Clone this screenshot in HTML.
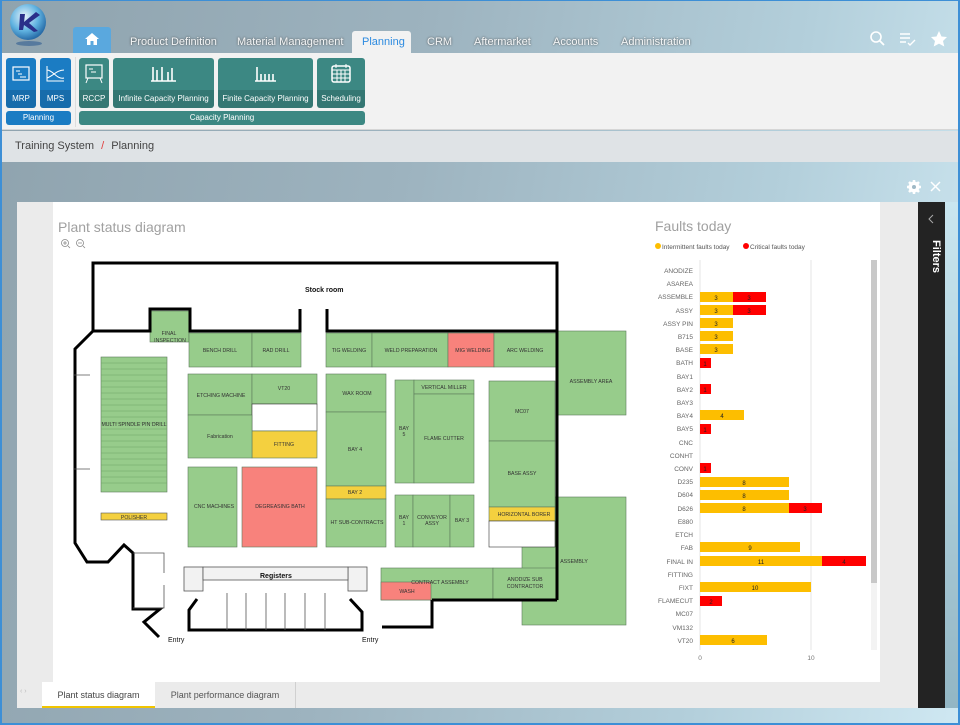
<!DOCTYPE html>
<html><head><meta charset="utf-8"><style>
*{margin:0;padding:0;box-sizing:border-box}
body{width:960px;height:725px;overflow:hidden;font-family:"Liberation Sans",sans-serif;position:relative;
background:linear-gradient(100deg,#8fa3ae 0%,#9db3bf 40%,#b3cfdb 75%,#cfe8f2 100%);}
.a{position:absolute}
.tab{position:absolute;top:36px;font-size:11px;color:#f4f6f7;text-shadow:0 0 2px #444}
.btn{position:absolute;top:58px;height:50px;border-radius:3px;color:#fff;font-size:8px;text-align:center}
.btn .l{position:absolute;left:0;right:0;bottom:0;height:18px;line-height:18px;background:rgba(0,0,0,.12);border-radius:0 0 3px 3px}
.blue{background:#1b7cc3}.teal{background:#3c8883}
.grp{position:absolute;top:111px;height:14px;line-height:14px;font-size:8px;color:#fff;text-align:center;border-radius:3px}
</style></head><body>
<div class="a" style="left:0;top:0;width:960px;height:725px;border:2px solid #3d8fd6;border-top-width:1px"></div>
<!-- logo -->
<div class="a" style="left:10px;top:4px;width:36px;height:36px;border-radius:50%;background:radial-gradient(circle at 40% 35%,#e8f4fb,#5fb2e0 45%,#1c5d9c 80%,#0e3d70)"></div>
<svg class="a" style="left:10px;top:4px" width="36" height="36"><path d="M10 10 L15 10 L14 18 L26 8 L30 11 L19 19 L28 27 L24 28 L14 21 L13 26 L9 26 Z" fill="#2a2f8a"/></svg>
<div class="a" style="left:16px;top:41px;width:26px;height:5px;border-radius:50%;background:rgba(30,80,140,.5)"></div>
<div class="a" style="left:73px;top:27px;width:38px;height:26px;background:#5aa8de;border-radius:3px 3px 0 0"></div>
<svg class="a" style="left:84px;top:32px" width="16" height="14"><path d="M8 1 L15 7 L13 7 L13 13 L9.5 13 L9.5 9 L6.5 9 L6.5 13 L3 13 L3 7 L1 7 Z" fill="#fff"/></svg>
<div class="tab" style="left:130px">Product Definition</div>
<div class="tab" style="left:237px">Material Management</div>
<div class="a" style="left:352px;top:31px;width:59px;height:22px;background:#f2f2f2;border-radius:3px 3px 0 0"></div>
<div class="tab" style="left:362px;color:#2d8be0;text-shadow:none">Planning</div>
<div class="tab" style="left:427px">CRM</div>
<div class="tab" style="left:474px">Aftermarket</div>
<div class="tab" style="left:553px">Accounts</div>
<div class="tab" style="left:621px">Administration</div>
<svg class="a" style="left:868px;top:29px" width="82" height="20">
<circle cx="8" cy="8" r="5" fill="none" stroke="#fff" stroke-width="1.6"/><path d="M12 12 L16 16" stroke="#fff" stroke-width="1.8"/>
<path d="M32 5h10M32 9h10M32 13h6" stroke="#fff" stroke-width="1.4"/><path d="M40 14l2 2 5-5" stroke="#fff" stroke-width="1.4" fill="none"/>
<path d="M71 2 L73.5 7.5 L79 8 L75 12 L76.3 17.5 L71 14.6 L65.7 17.5 L67 12 L63 8 L68.5 7.5 Z" fill="#fff"/>
</svg>
<!-- ribbon -->
<div class="a" style="left:2px;top:53px;width:956px;height:77px;background:#f2f2f2;border-bottom:1px solid #d6d6d6"></div>
<div class="a" style="left:75px;top:57px;width:1px;height:70px;background:#ddd"></div>
<div class="btn blue" style="left:6px;width:30px"><svg width="30" height="32"><rect x="7" y="9" width="16" height="13" fill="none" stroke="#fff" stroke-width="1.2"/><path d="M10 13h4M12 16h4M14 19h6" stroke="#fff"/></svg><div class="l">MRP</div></div>
<div class="btn blue" style="left:40px;width:31px"><svg width="31" height="32"><path d="M7 8v15h17M7 12c6 0 10 10 17 8M7 20c6-2 10-8 17-8" stroke="#fff" fill="none"/></svg><div class="l">MPS</div></div>
<div class="grp blue" style="left:6px;width:65px">Planning</div>
<div class="btn teal" style="left:79px;width:30px"><svg width="30" height="32"><rect x="7" y="7" width="16" height="13" fill="none" stroke="#fff" stroke-width="1.2"/><path d="M10 11h4M12 14h5M9 20l-2 5M21 20l2 5" stroke="#fff"/></svg><div class="l">RCCP</div></div>
<div class="btn teal" style="left:113px;width:101px"><svg width="101" height="32"><path d="M40 9v14M44 12v11M49 9v14M55 14v9M59 10v13M38 23h25" stroke="#fff" stroke-width="1.6"/></svg><div class="l">Infinite Capacity Planning</div></div>
<div class="btn teal" style="left:218px;width:95px"><svg width="95" height="32"><path d="M39 9v14M43 16v7M47 16v7M51 16v7M55 16v7M37 23h21" stroke="#fff" stroke-width="1.6"/></svg><div class="l">Finite Capacity Planning</div></div>
<div class="btn teal" style="left:317px;width:48px"><svg width="48" height="32"><rect x="15" y="8" width="18" height="16" rx="2" fill="none" stroke="#fff" stroke-width="1.5"/><path d="M15 12h18M19 6v4M29 6v4M15 16h18M15 20h18M20 12v12M24 12v12M28 12v12" stroke="#fff"/></svg><div class="l">Scheduling</div></div>
<div class="grp teal" style="left:79px;width:286px">Capacity Planning</div>
<!-- breadcrumb -->
<div class="a" style="left:2px;top:131px;width:956px;height:31px;background:#dfe3e6"></div>
<div class="a" style="left:15px;top:140px;font-size:11px;color:#444">Training System <span style="color:#e03c3c;margin:0 4px">/</span> Planning</div>
<svg class="a" style="left:904px;top:179px" width="40" height="16"><circle cx="10" cy="8" r="5.5" fill="#fff"/><circle cx="10" cy="8" r="2" fill="#9fb9c6"/><path d="M10 1v14M3 8h14M5 3l10 10M15 3L5 13" stroke="#fff" stroke-width="2.5"/><circle cx="10" cy="8" r="2" fill="#9fb9c6"/><path d="M27 3l9 9M36 3l-9 9" stroke="#fff" stroke-width="1.5"/></svg>
<!-- panel -->
<div class="a" style="left:17px;top:202px;width:901px;height:506px;background:#ebebeb"></div>
<div class="a" style="left:53px;top:202px;width:827px;height:480px;background:#fff"></div>
<div class="a" style="left:918px;top:202px;width:27px;height:506px;background:#232323"></div>
<div class="a" style="left:945px;top:202px;width:13px;height:506px;background:linear-gradient(#c9e6f0,#93b6c4)"></div>
<div class="a" style="left:920px;top:240px;width:22px;font-size:11px;font-weight:bold;color:#fff;writing-mode:vertical-rl">Filters</div>
<svg class="a" style="left:925px;top:213px" width="12" height="12"><path d="M8 2L4 6l4 4" stroke="#aaa" fill="none"/></svg>
<div class="a" style="left:42px;top:682px;width:113px;height:26px;background:#fff;border-bottom:2px solid #f0c400;font-size:9px;color:#444;text-align:center;line-height:26px">Plant status diagram</div>
<div class="a" style="left:155px;top:682px;width:141px;height:26px;border-right:1px solid #d0d0d0;font-size:9px;color:#555;text-align:center;line-height:26px">Plant performance diagram</div>
<div class="a" style="left:20px;top:688px;font-size:7px;color:#bbb">‹ ›</div>
<div class="a" style="left:58px;top:219px;font-size:14px;color:#a0a0a0">Plant status diagram</div>
<div class="a" style="left:655px;top:218px;font-size:14px;color:#a0a0a0">Faults today</div>
<svg class="a" style="left:0;top:0" width="960" height="725" font-family="Liberation Sans, sans-serif">
<g fill="none" stroke="#888" stroke-width="0.8"><circle cx="65" cy="243" r="3.5"/><circle cx="80" cy="243" r="3.5"/><path d="M63 243h4M65 241v4M78 243h4M68 246l2 2M83 246l2 2"/></g>
<!-- legend -->
<circle cx="658" cy="246" r="3" fill="#fdbe00"/><text x="662" y="249" font-size="6.5" fill="#555">Intermittent faults today</text>
<circle cx="746" cy="246" r="3" fill="#f00"/><text x="750" y="249" font-size="6.5" fill="#555">Critical faults today</text>
<!-- floor plan rooms -->
<g stroke="#5c7a5c" stroke-width="0.6" font-size="5.2" fill="#333" text-anchor="middle">
<rect x="101" y="357" width="66" height="135" fill="#97cc8b"/>
<g stroke="#6fa565" stroke-width="0.5"><path d="M101 363h66M101 369h66M101 375h66M101 381h66M101 387h66M101 393h66M101 399h66M101 405h66M101 411h66M101 417h66M101 423h66M101 429h66M101 435h66M101 441h66M101 447h66M101 453h66M101 459h66M101 465h66M101 471h66M101 477h66M101 483h66"/></g>
<rect x="101" y="513" width="66" height="7" fill="#f4d03f" stroke="#555"/>
<rect x="150" y="311" width="39" height="31" fill="#97cc8b"/>
<rect x="189" y="333" width="63" height="34" fill="#97cc8b"/><rect x="252" y="333" width="49" height="34" fill="#97cc8b"/>
<rect x="326" y="333" width="46" height="34" fill="#97cc8b"/><rect x="372" y="333" width="76" height="34" fill="#97cc8b"/>
<rect x="448" y="333" width="46" height="34" fill="#f8827c"/><rect x="494" y="333" width="62" height="34" fill="#97cc8b"/>
<rect x="557" y="331" width="69" height="84" fill="#97cc8b"/><rect x="522" y="497" width="104" height="128" fill="#97cc8b"/>
<rect x="188" y="374" width="64" height="41" fill="#97cc8b"/><rect x="252" y="374" width="65" height="30" fill="#97cc8b"/>
<rect x="252" y="404" width="65" height="27" fill="#fff" stroke="#333"/><rect x="252" y="431" width="65" height="27" fill="#f4d03f"/>
<rect x="188" y="415" width="64" height="43" fill="#97cc8b"/>
<rect x="188" y="467" width="49" height="80" fill="#97cc8b"/><rect x="242" y="467" width="75" height="80" fill="#f8827c"/>
<rect x="326" y="374" width="60" height="38" fill="#97cc8b"/><rect x="326" y="412" width="60" height="74" fill="#97cc8b"/>
<rect x="326" y="486" width="60" height="13" fill="#f4d03f"/><rect x="326" y="499" width="60" height="48" fill="#97cc8b"/>
<rect x="395" y="380" width="19" height="103" fill="#97cc8b"/><rect x="414" y="380" width="60" height="14" fill="#97cc8b"/><rect x="414" y="394" width="60" height="89" fill="#97cc8b"/>
<rect x="395" y="495" width="18" height="52" fill="#97cc8b"/><rect x="413" y="495" width="37" height="52" fill="#97cc8b"/><rect x="450" y="495" width="24" height="52" fill="#97cc8b"/>
<rect x="489" y="381" width="66" height="60" fill="#97cc8b"/><rect x="489" y="441" width="66" height="66" fill="#97cc8b"/>
<rect x="489" y="507" width="66" height="14" fill="#f4d03f"/><rect x="489" y="521" width="66" height="26" fill="#fff" stroke="#333"/>
<rect x="381" y="568" width="112" height="32" fill="#97cc8b"/><rect x="381" y="582" width="50" height="18" fill="#f8827c"/><rect x="493" y="568" width="64" height="32" fill="#97cc8b"/>
<g stroke="none">
<text x="169" y="335">FINAL</text><text x="170" y="342">INSPECTION</text>
<text x="220" y="352">BENCH DRILL</text><text x="276" y="352">RAD DRILL</text>
<text x="349" y="352">TIG WELDING</text><text x="411" y="352">WELD PREPARATION</text><text x="473" y="352">MIG WELDING</text><text x="525" y="352">ARC WELDING</text>
<text x="591" y="383">ASSEMBLY AREA</text><text x="574" y="563">ASSEMBLY</text>
<text x="134" y="426">MULTI SPINDLE PIN DRILL</text><text x="134" y="519">POLISHER</text>
<text x="221" y="397">ETCHING MACHINE</text><text x="284" y="390">VT20</text><text x="220" y="438">Fabrication</text><text x="284" y="446">FITTING</text>
<text x="214" y="508">CNC MACHINES</text><text x="280" y="508">DEGREASING BATH</text>
<text x="357" y="395">WAX ROOM</text><text x="355" y="451">BAY 4</text><text x="355" y="494">BAY 2</text><text x="357" y="524">HT SUB-CONTRACTS</text>
<text x="404" y="430">BAY</text><text x="404" y="436">5</text><text x="444" y="389">VERTICAL MILLER</text><text x="444" y="440">FLAME CUTTER</text>
<text x="404" y="519">BAY</text><text x="404" y="525">1</text><text x="432" y="519">CONVEYOR</text><text x="432" y="525">ASSY</text><text x="462" y="522">BAY 3</text>
<text x="522" y="413">MC07</text><text x="522" y="475">BASE ASSY</text><text x="524" y="516">HORIZONTAL BORER</text>
<text x="440" y="584">CONTRACT ASSEMBLY</text><text x="407" y="593">WASH</text><text x="525" y="581">ANODIZE SUB</text><text x="525" y="588">CONTRACTOR</text>
</g></g>
<!-- walls -->
<g fill="none" stroke="#000" stroke-width="3">
<path d="M93 331V263H557V600"/>
<path d="M93 331H150V309H190V331H300V309"/><path d="M327 309V331H557"/>
<path d="M93 331L75 349V543L87 562H108L124 545L133 553V609H160L144 622L159 637"/>
<path d="M197 599L189 610V630H362V612L350 599"/>
<path d="M432 600H557M432 600V627H382"/>
</g>
<g stroke="#555" stroke-width="0.8" fill="none"><path d="M74 375H90M74 469H90M133 553H164V573M164 585V608H133"/>
<path d="M227 593V630M246 593V630M266 593V630M285 593V630M305 593V630M325 593V630"/></g>
<g stroke="#555" stroke-width="0.8" fill="#f2f2f2"><rect x="184" y="567" width="19" height="24"/><rect x="348" y="567" width="19" height="24"/><rect x="203" y="567" width="145" height="13"/></g>
<g font-size="7" fill="#111" font-weight="bold"><text x="305" y="292">Stock room</text><text x="260" y="578">Registers</text></g>
<g font-size="7" fill="#111"><text x="168" y="642">Entry</text><text x="362" y="642">Entry</text></g>
<!-- chart -->
<rect x="871" y="260" width="6" height="390" fill="#f3f3f3"/><rect x="871" y="260" width="6" height="323" fill="#c8c8c8"/>
<path d="M700 260V650M811 260V650" stroke="#e6e6e6"/>
<g font-size="6.5" fill="#666" text-anchor="end">
<text x="693" y="273">ANODIZE</text><text x="693" y="286">ASAREA</text><text x="693" y="299">ASSEMBLE</text><text x="693" y="313">ASSY</text><text x="693" y="326">ASSY PIN</text><text x="693" y="339">B715</text><text x="693" y="352">BASE</text><text x="693" y="365">BATH</text><text x="693" y="379">BAY1</text><text x="693" y="392">BAY2</text><text x="693" y="405">BAY3</text><text x="693" y="418">BAY4</text><text x="693" y="431">BAY5</text><text x="693" y="445">CNC</text><text x="693" y="458">CONHT</text><text x="693" y="471">CONV</text><text x="693" y="484">D235</text><text x="693" y="497">D604</text><text x="693" y="511">D626</text><text x="693" y="524">E880</text><text x="693" y="537">ETCH</text><text x="693" y="550">FAB</text><text x="693" y="564">FINAL IN</text><text x="693" y="577">FITTING</text><text x="693" y="590">FIXT</text><text x="693" y="603">FLAMECUT</text><text x="693" y="616">MC07</text><text x="693" y="630">VM132</text><text x="693" y="643">VT20</text>
</g>
<g fill="#fdbe00"><rect x="700" y="292" width="33" height="10"/><rect x="700" y="305" width="33" height="10"/><rect x="700" y="318" width="33" height="10"/><rect x="700" y="331" width="33" height="10"/><rect x="700" y="344" width="33" height="10"/><rect x="700" y="410" width="44" height="10"/><rect x="700" y="477" width="89" height="10"/><rect x="700" y="490" width="89" height="10"/><rect x="700" y="503" width="89" height="10"/><rect x="700" y="542" width="100" height="10"/><rect x="700" y="556" width="122" height="10"/><rect x="700" y="582" width="111" height="10"/><rect x="700" y="635" width="67" height="10"/></g>
<g fill="#f00"><rect x="733" y="292" width="33" height="10"/><rect x="733" y="305" width="33" height="10"/><rect x="700" y="358" width="11" height="10"/><rect x="700" y="384" width="11" height="10"/><rect x="700" y="424" width="11" height="10"/><rect x="700" y="463" width="11" height="10"/><rect x="789" y="503" width="33" height="10"/><rect x="822" y="556" width="44" height="10"/><rect x="700" y="596" width="22" height="10"/></g>
<g font-size="6" fill="#222" text-anchor="middle">
<text x="716" y="300">3</text><text x="749" y="300">3</text><text x="716" y="313">3</text><text x="749" y="313">3</text><text x="716" y="326">3</text><text x="716" y="339">3</text><text x="716" y="352">3</text><text x="705" y="366">1</text><text x="705" y="392">1</text><text x="722" y="418">4</text><text x="705" y="432">1</text><text x="705" y="471">1</text><text x="744" y="485">8</text><text x="744" y="498">8</text><text x="744" y="511">8</text><text x="805" y="511">3</text><text x="750" y="550">9</text><text x="761" y="564">11</text><text x="844" y="564">4</text><text x="755" y="590">10</text><text x="711" y="604">2</text><text x="733" y="643">6</text>
</g>
<g font-size="6.5" fill="#777" text-anchor="middle"><text x="700" y="660">0</text><text x="811" y="660">10</text></g>
</svg>
</body></html>
